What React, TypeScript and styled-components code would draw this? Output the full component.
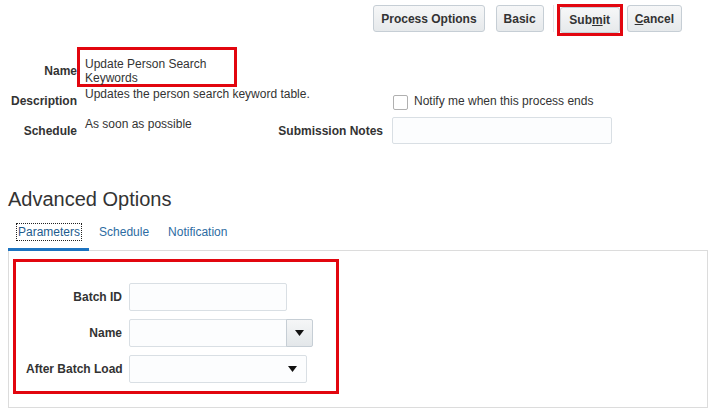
import React from "react";
import styled, { createGlobalStyle } from "styled-components";

const GlobalStyle = createGlobalStyle`
  html, body { margin: 0; padding: 0; background: #fff; }
  body {
    font-family: Arial, "Liberation Sans", Helvetica, sans-serif;
    font-size: 12px;
    color: #333;
  }
  * { box-sizing: border-box; }
`;

const Page = styled.div`
  width: 713px;
  height: 408px;
  overflow: hidden;
  padding: 5px 5px 0 8px;
  display: flex;
  flex-direction: column;
`;

const Toolbar = styled.div`
  display: flex;
  justify-content: flex-end;
  align-items: flex-start;
  height: 27px;
  padding-right: 26px;
`;

const Button = styled.button<{ $h?: number; $minW?: number }>`
  height: ${(p) => p.$h ?? 27}px;
  min-width: ${(p) => p.$minW ?? 0}px;
  padding: 0 7px;
  border: 1px solid #c6ced5;
  border-radius: 3px;
  background: linear-gradient(#f6f7f8, #e6e9eb);
  font: bold 12px Arial, "Liberation Sans", sans-serif;
  color: #333;
  cursor: pointer;
  white-space: nowrap;
  u { text-decoration: underline; }
`;

const ButtonGap = styled.div<{ $w: number }>`
  width: ${(p) => p.$w}px;
  flex: none;
`;

const Separator = styled.div`
  width: 1px;
  height: 27px;
  background: #e3e6e8;
`;

const Highlight = styled.div`
  display: flex;
  border: 3px solid #e2060f;
  margin-top: -1px;
`;

const FormGrid = styled.div`
  display: grid;
  grid-template-columns: 69px 160px 155px 220px;
  grid-template-rows: 40px 30px 27px;
  margin-top: 15px;
`;

const Label = styled.div<{ $pt: number; $pr?: number }>`
  text-align: right;
  font-weight: bold;
  line-height: 14px;
  white-space: nowrap;
  padding-top: ${(p) => p.$pt}px;
  padding-right: ${(p) => p.$pr ?? 0}px;
  color: #333;
`;

const NameBox = styled.div`
  border: 3px solid #e2060f;
  padding: 7px 5px 0;
  line-height: 14px;
  height: 40px;
`;

const Value = styled.div<{ $span?: boolean }>`
  line-height: 14px;
  padding-left: 8px;
  white-space: nowrap;
  grid-column: ${(p) => (p.$span ? "2 / 4" : "auto")};
`;

const Empty = styled.div``;

const NotifyCell = styled.label`
  display: flex;
  align-items: flex-start;
  gap: 6px;
  line-height: 14px;
`;

const Checkbox = styled.input`
  appearance: none;
  margin: 8px 0 0 1px;
  width: 15px;
  height: 15px;
  border: 1px solid #b0b0b0;
  border-radius: 2px;
  background: #fff;
  flex: none;
`;

const NotifyText = styled.span`
  padding-top: 7px;
  white-space: nowrap;
`;

const TextField = styled.input<{ $w: number; $h: number }>`
  width: ${(p) => p.$w}px;
  height: ${(p) => p.$h}px;
  border: 1px solid #d9dfe4;
  border-radius: 2px;
  background: #fcfdfe;
  padding: 0 5px;
  font: 12px Arial, "Liberation Sans", sans-serif;
  color: #333;
  outline: none;
`;

const Heading = styled.h2`
  margin: 43px 0 0;
  font: normal 20px/24px Arial, "Liberation Sans", sans-serif;
  color: #333;
`;

const TabBar = styled.div`
  display: flex;
  margin-top: 7px;
  border-bottom: 1px solid #dcdcdc;
`;

const Tab = styled.div<{ $active?: boolean }>`
  padding: 7px 9px 9px 10px;
  line-height: 14px;
  margin-bottom: -1px;
  border-bottom: 3px solid ${(p) => (p.$active ? "#1c73c1" : "transparent")};
  color: ${(p) => (p.$active ? "#1d5b8e" : "#2d6ca2")};
  cursor: pointer;
`;

const TabText = styled.span<{ $focus?: boolean }>`
  outline: ${(p) => (p.$focus ? "1px dotted #222" : "none")};
  outline-offset: 1px;
`;

const Panel = styled.div`
  flex: 1;
  border: 1px solid #dcdcdc;
  border-top: none;
  padding: 8px 0 0 4px;
`;

const ParamFrame = styled.div`
  width: 326px;
  height: 135px;
  border: 3px solid #e2060f;
  padding: 21px 0 8px 10px;
  display: grid;
  grid-template-columns: 96px auto;
  grid-auto-rows: 28px;
  column-gap: 7px;
  row-gap: 8px;
  align-items: center;
  justify-content: start;
`;

const ParamLabel = styled.div`
  text-align: right;
  font-weight: bold;
  white-space: nowrap;
  color: #333;
`;

const Combo = styled.div`
  display: flex;
  width: 184px;
  height: 28px;
`;

const ComboField = styled.input`
  flex: 1;
  min-width: 0;
  height: 28px;
  border: 1px solid #d9dfe4;
  border-radius: 2px 0 0 2px;
  background: #fcfdfe;
  outline: none;
`;

const DropButton = styled.button`
  width: 27px;
  height: 28px;
  margin-left: -1px;
  border: 1px solid #c6ced5;
  border-radius: 0 2px 2px 0;
  background: linear-gradient(#f5f6f7, #e3e7ea);
  display: flex;
  align-items: center;
  justify-content: center;
  padding: 0;
`;

const SelectBox = styled.div`
  width: 178px;
  height: 28px;
  border: 1px solid #d9dfe4;
  border-radius: 2px;
  background: #fcfdfe;
  display: flex;
  align-items: center;
  justify-content: flex-end;
  padding-right: 9px;
`;

const Arrow = () => (
  <svg width="9" height="6" viewBox="0 0 9 6">
    <path d="M0 0 H9 L4.5 6 Z" fill="#111" />
  </svg>
);

export default function App() {
  return (
    <>
      <GlobalStyle />
      <Page>
        <Toolbar>
          <Button $minW={111}>Process Options</Button>
          <ButtonGap $w={11} />
          <Button $minW={48}>Basic</Button>
          <ButtonGap $w={9} />
          <Separator />
          <ButtonGap $w={3} />
          <Highlight>
            <Button $h={26} $minW={60}>
              Sub<u>m</u>it
            </Button>
          </Highlight>
          <ButtonGap $w={4} />
          <Button $minW={55}>
            <u>C</u>ancel
          </Button>
        </Toolbar>

        <FormGrid>
          <Label $pt={17}>Name</Label>
          <NameBox>Update Person Search Keywords</NameBox>
          <Empty />
          <Empty />

          <Label $pt={7}>Description</Label>
          <Value $span>Updates the person search keyword table.</Value>
          <NotifyCell>
            <Checkbox type="checkbox" />
            <NotifyText>Notify me when this process ends</NotifyText>
          </NotifyCell>

          <Label $pt={7}>Schedule</Label>
          <Value>As soon as possible</Value>
          <Label $pt={7} $pr={9}>
            Submission Notes
          </Label>
          <TextField $w={220} $h={27} />
        </FormGrid>

        <Heading>Advanced Options</Heading>

        <TabBar>
          <Tab $active>
            <TabText $focus>Parameters</TabText>
          </Tab>
          <Tab>
            <TabText>Schedule</TabText>
          </Tab>
          <Tab>
            <TabText>Notification</TabText>
          </Tab>
        </TabBar>

        <Panel>
          <ParamFrame>
            <ParamLabel>Batch ID</ParamLabel>
            <TextField $w={158} $h={28} />

            <ParamLabel>Name</ParamLabel>
            <Combo>
              <ComboField />
              <DropButton>
                <Arrow />
              </DropButton>
            </Combo>

            <ParamLabel>After Batch Load</ParamLabel>
            <SelectBox>
              <Arrow />
            </SelectBox>
          </ParamFrame>
        </Panel>
      </Page>
    </>
  );
}
